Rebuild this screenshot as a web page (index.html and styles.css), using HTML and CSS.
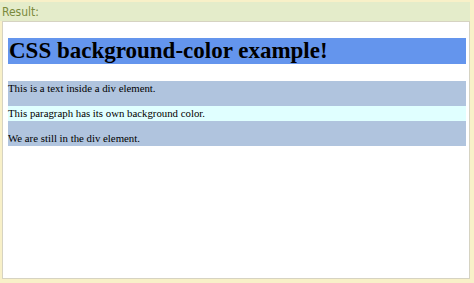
FILE: index.html
```html
<!DOCTYPE html>
<html lang="en">

<head>
    <meta charset="UTF-8">
    <meta name="viewport" content="width=device-width, initial-scale=1.0">
    <title>Result</title>
    <link rel="stylesheet" href="styles.css">
</head>

<body>
    <div class="panel">
        <div class="panel-head">Result:</div>
        <div class="frame">
            <h1 class="title">CSS background-color example!</h1>
            <div class="box">
                This is a text inside a div element.
                <p class="para">This paragraph has its own background color.</p>
                We are still in the div element.
            </div>
        </div>
    </div>
</body>
</html>
```

FILE: styles.css
```css
* {
    margin: 0;
    box-sizing: border-box;
    padding: 0;
}

body {
    width: 474px;
    height: 283px;
    background: #f8f0c8;
}

.panel {
    display: flex;
    flex-direction: column;
    height: 283px;
    padding-top: 2px;
}

.panel-head {
    height: 19px;
    margin-right: 4px;
    padding: 4px 0 0 2px;
    background: #e4ecca;
    color: #7a8a3c;
    font-family: "DejaVu Sans Condensed", "DejaVu Sans", sans-serif;
    font-size: 12px;
    line-height: 13px;
}

.frame {
    height: 258px;
    margin: 0 4px 0 2px;
    padding: 16px 3px 0 5px;
    border: 1px solid #d6d3c2;
    background: #fff;
    font-family: "Liberation Serif", "Times New Roman", serif;
    color: #000;
}

.title {
    background: #6495ed;
    font-size: 23px;
    line-height: 26px;
    font-weight: bold;
    padding-left: 1px;
}

.box {
    margin-top: 17px;
    background: #b0c4de;
    font-size: 10.8px;
    line-height: 15px;
}

.para {
    margin: 10px 0;
    background: #e0ffff;
}
```
